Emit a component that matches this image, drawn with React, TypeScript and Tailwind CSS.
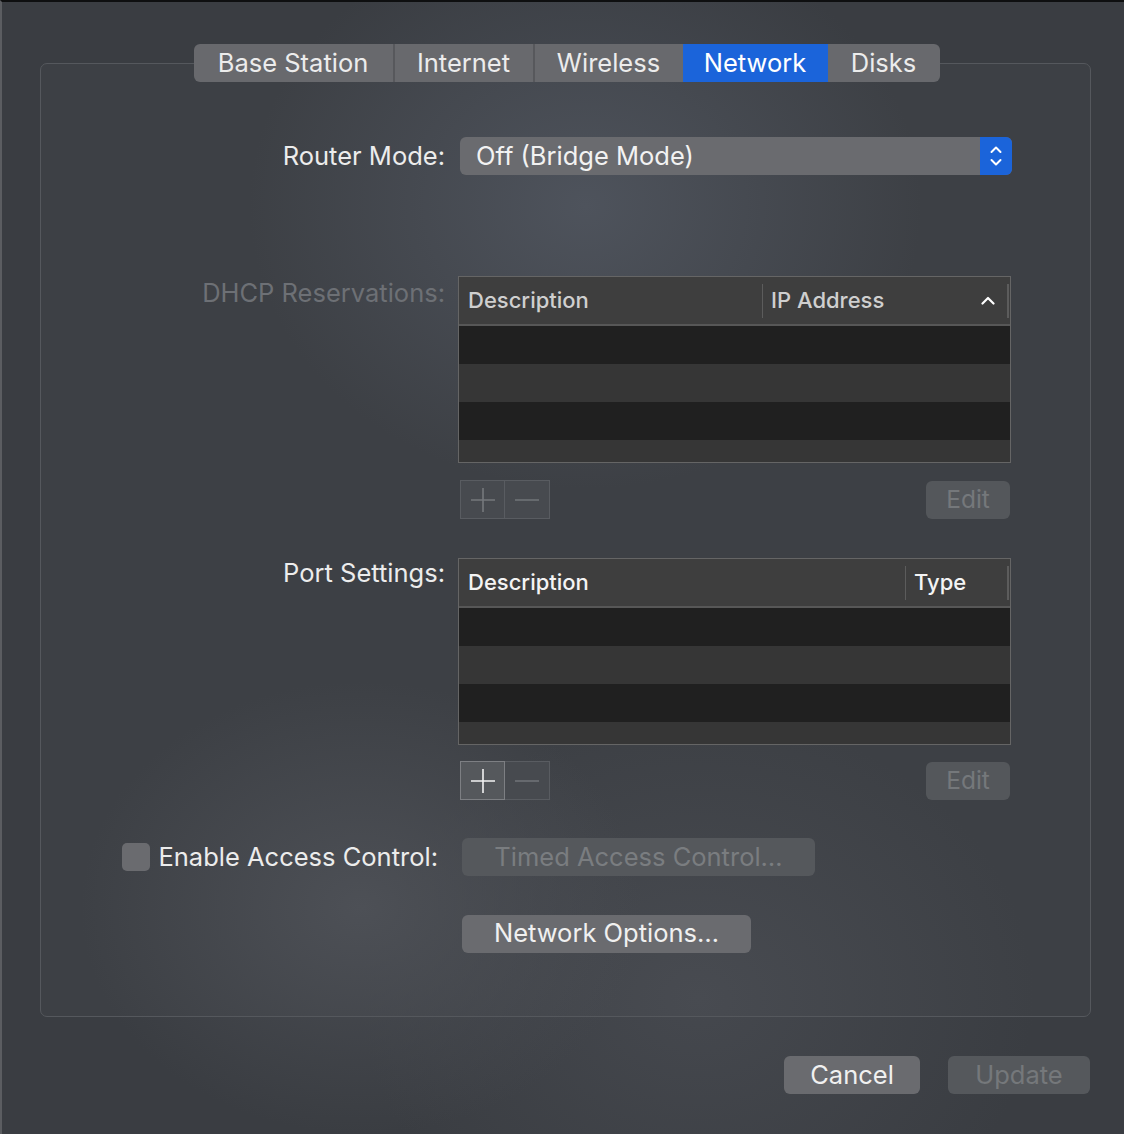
import React from "react";

function HeaderChevron() {
  return (
    <svg width="14" height="9" viewBox="0 0 14 9" fill="none">
      <path d="M1.5 7.5 L7 2 L12.5 7.5" stroke="#ffffff" strokeWidth="2.2" strokeLinecap="round" strokeLinejoin="round" />
    </svg>
  );
}

function PlusMinus({ plusEnabled }: { plusEnabled: boolean }) {
  return (
    <div className="flex ml-[2px] h-[39px]">
      <div
        className={
          plusEnabled
            ? "w-[45px] h-full flex items-center justify-center bg-[#55585c] border border-[#7d7f83]"
            : "w-[45px] h-full flex items-center justify-center bg-[#474a4f] border border-[#595c61]"
        }
      >
        <svg width="26" height="26" viewBox="0 0 26 26">
          <path d="M13 1 V25 M1 13 H25" stroke={plusEnabled ? "#f2f2f2" : "#75787c"} strokeWidth="1.6" />
        </svg>
      </div>
      <div className="w-[45px] h-full flex items-center justify-center bg-[#474a4f] border border-l-0 border-[#595c61]">
        <svg width="26" height="26" viewBox="0 0 26 26">
          <path d="M1 13 H25" stroke="#6f7276" strokeWidth="1.6" />
        </svg>
      </div>
    </div>
  );
}

function EditButton() {
  return (
    <div className="w-[84px] h-[38px] rounded-[6px] bg-[#54575b] flex items-center justify-center text-[24.5px] text-[#75787b]">
      Edit
    </div>
  );
}

function Table({ col1, col2, chevron, dim }: { col1: number; col2: string; chevron: boolean; dim: boolean }) {
  const txt = dim ? "text-[#cfcfcf]" : "text-[#f4f4f4]";
  return (
    <div className="w-[553px] h-[187px] border border-[#656565] flex flex-col bg-[#363636]">
      <div className="h-[49px] shrink-0 flex items-center bg-[#3e3e3e] border-b-2 border-[#575757]">
        <div className={"h-full flex items-center pl-[9px] text-[22px] font-medium " + txt} style={{ width: col1 }}>
          Description
        </div>
        <div className="w-px h-[34px] bg-[#5c5c5c]" />
        <div className={"flex-1 h-full flex items-center pl-[8px] pr-[12px] text-[22px] font-medium justify-between " + txt}>
          <span>{col2}</span>
          {chevron ? <HeaderChevron /> : null}
        </div>
        <div className="w-[2px] h-[34px] bg-[#5c5c5c] mr-[1px]" />
      </div>
      <div className="h-[38px] shrink-0 bg-[#202020]" />
      <div className="h-[38px] shrink-0 bg-[#363636]" />
      <div className="h-[38px] shrink-0 bg-[#202020]" />
      <div className="flex-1 bg-[#363636]" />
    </div>
  );
}

export default function App() {
  return (
    <div className="w-[1124px] h-[1134px] border-t-2 border-t-[#0e0f10] border-l-2 border-l-[#5b5d61] bg-[#3a3d42] bg-[image:radial-gradient(ellipse_30%_25%_at_52%_18%,#4b5059_0%,transparent_100%),radial-gradient(ellipse_25%_20%_at_32%_80%,#4a4d53_0%,transparent_100%),radial-gradient(ellipse_30%_25%_at_62%_88%,#45484e_0%,transparent_100%)] font-[Inter,'Noto_Sans',sans-serif] text-[#ececec] overflow-hidden">
      <div className="ml-[38px] mt-[61px] w-[1051px] h-[954px] rounded-[7px] border border-[#55585d] bg-[#ffffff05] flex flex-col">
        <div className="flex justify-center -mt-[20px] ml-[2px]">
          <div className="flex h-[38px] rounded-[6px] overflow-hidden bg-[#68696d] text-[25.5px] text-[#ececec]">
            <div className="w-[201px] flex items-center justify-center border-r-2 border-[#57585c]">Base Station</div>
            <div className="w-[140px] flex items-center justify-center border-r-2 border-[#57585c]">Internet</div>
            <div className="w-[148px] flex items-center justify-center">Wireless</div>
            <div className="w-[145px] flex items-center justify-center bg-[#1b64da] text-white">Network</div>
            <div className="w-[112px] flex items-center justify-center">Disks</div>
          </div>
        </div>

        <div className="flex items-center mt-[55px]">
          <div className="w-[404px] text-right text-[25.5px] text-[#ececec]">Router Mode:</div>
          <div className="ml-[15px] w-[552px] h-[38px] rounded-[6px] bg-[#6a6b6f] flex items-center justify-between overflow-hidden">
            <span className="pl-[16px] text-[25.5px] text-[#f2f2f2]">Off (Bridge Mode)</span>
            <div className="w-[32px] h-full bg-[#1b64da] flex items-center justify-center">
              <svg width="14" height="26" viewBox="0 0 14 26" fill="none">
                <path d="M2.5 9 L7 4.5 L11.5 9" stroke="#ffffff" strokeWidth="2" strokeLinecap="round" strokeLinejoin="round" />
                <path d="M2.5 17 L7 21.5 L11.5 17" stroke="#ffffff" strokeWidth="2" strokeLinecap="round" strokeLinejoin="round" />
              </svg>
            </div>
          </div>
        </div>

        <div className="flex items-start mt-[101px]">
          <div className="w-[404px] text-right text-[25.5px] leading-[30px] pt-[2px] text-[#6d7075]">DHCP Reservations:</div>
          <div className="ml-[13px] flex flex-col">
            <Table col1={303} col2="IP Address" chevron={true} dim={true} />
            <div className="flex items-center justify-between mt-[17px] w-[552px]">
              <PlusMinus plusEnabled={false} />
              <EditButton />
            </div>
          </div>
        </div>

        <div className="flex items-start mt-[39px]">
          <div className="w-[404px] text-right text-[25.5px] leading-[30px] text-[#ececec]">Port Settings:</div>
          <div className="ml-[13px] flex flex-col">
            <Table col1={446} col2="Type" chevron={false} dim={false} />
            <div className="flex items-center justify-between mt-[16px] w-[552px]">
              <PlusMinus plusEnabled={true} />
              <EditButton />
            </div>
          </div>
        </div>

        <div className="flex items-center mt-[38px]">
          <div className="w-[397px] flex items-center justify-end gap-[8px]">
            <div className="w-[28px] h-[28px] rounded-[5px] bg-[#6a6b6f]" />
            <span className="text-[25.5px] text-[#ececec]">Enable Access Control:</span>
          </div>
          <div className="ml-[24px] w-[353px] h-[38px] rounded-[6px] bg-[#55585c] flex items-center justify-center text-[25.5px] text-[#7a7d80]">
            Timed Access Control…
          </div>
        </div>

        <div className="flex mt-[38px]">
          <div className="ml-[421px] w-[289px] h-[38px] rounded-[6px] bg-[#6a6b6f] flex items-center justify-center text-[25.5px] text-[#f0f0f0]">
            Network Options…
          </div>
        </div>
      </div>

      <div className="flex justify-end gap-[28px] pr-[34px] mt-[39px]">
        <div className="w-[136px] h-[38px] rounded-[6px] bg-[#6a6b6f] flex items-center justify-center text-[25.5px] text-[#f0f0f0]">
          Cancel
        </div>
        <div className="w-[142px] h-[38px] rounded-[6px] bg-[#55585c] flex items-center justify-center text-[25.5px] text-[#75787b]">
          Update
        </div>
      </div>
    </div>
  );
}
